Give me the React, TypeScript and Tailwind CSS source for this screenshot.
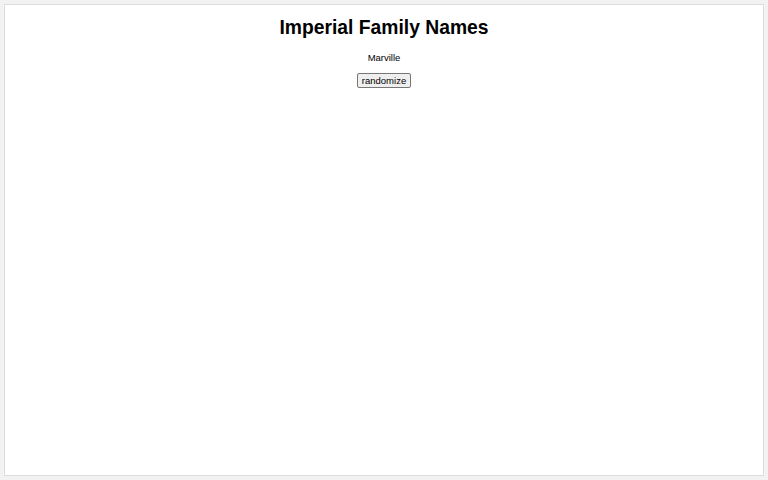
export default function App() {
  return (
    <div className="h-[480px] w-[768px] bg-[#f2f2f2] p-[4px] font-['Liberation_Sans',Arial,sans-serif]">
      <div className="flex h-[472px] flex-col items-center border border-[#dcdcdc] bg-white">
        <h1 className="mt-[11px] text-[19.3px] font-bold leading-[24px] text-black">Imperial Family Names</h1>
        <p className="mt-[12px] text-[9.5px] leading-[12px] text-black">Marville</p>
        <button
          type="button"
          className="mt-[9px] h-[15px] rounded-[2px] border border-[#767676] bg-[#efefef] px-[4px] text-[9.5px] leading-[12px] text-black"
        >
          randomize
        </button>
      </div>
    </div>
  );
}
